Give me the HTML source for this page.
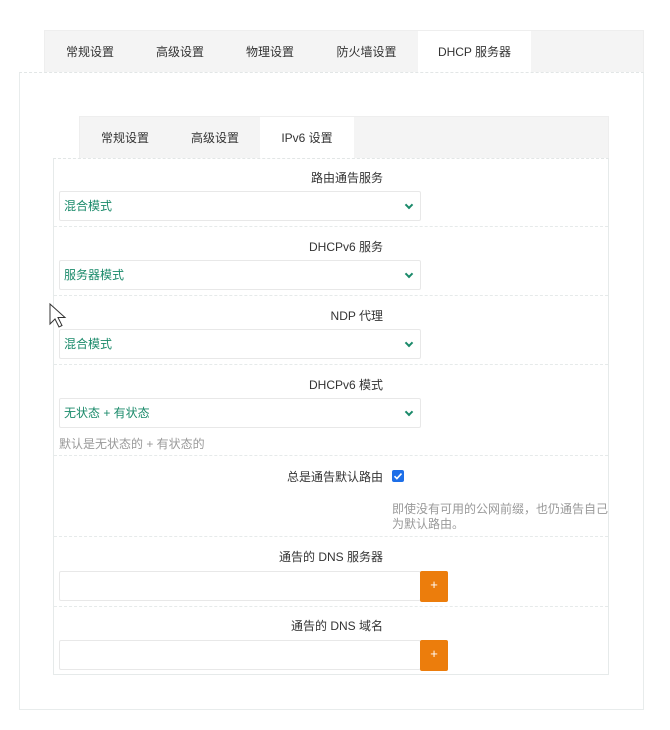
<!DOCTYPE html>
<html><head><meta charset="utf-8"><style>
*{box-sizing:border-box;margin:0;padding:0}
body{width:670px;height:730px;background:#fff;font-family:"Liberation Sans","Noto Sans CJK SC",sans-serif;font-size:12px;color:#333;position:relative;overflow:hidden}
.a{position:absolute}
.tabs{background:#f4f4f4;border:1px solid #eee;border-bottom:none}
.tab{position:absolute;top:0;height:100%;line-height:42px;text-align:center;color:#333}
.tab.on{background:#fff}
.lbl{position:absolute;right:287px;width:300px;text-align:right;color:#333}
.sel{position:absolute;left:59px;width:362px;height:30px;border:1px solid #e8e8e8;border-radius:2px;color:#1a8a6a;line-height:28px;padding-left:4px;background:#fff}
.sel:after{content:"";position:absolute;right:8px;top:10px;width:4px;height:4px;border-right:2px solid #1a8a6a;border-bottom:2px solid #1a8a6a;transform:rotate(45deg)}
.sep{position:absolute;left:54px;width:554px;border-top:1px dashed #e6eaea}
.inp{position:absolute;left:59px;width:362px;height:30px;border:1px solid #e8e8e8;border-radius:2px;background:#fff}
.btn{position:absolute;left:420px;width:28px;height:31px;background:#ec7d0c;border-radius:2px;color:#fff;text-align:center;line-height:28px;font-size:13px}
.hint{color:#999}
</style></head><body>
<div class="a tabs" style="left:44px;top:30px;width:600px;height:42px">
<div class="tab" style="left:0;width:90px">常规设置</div>
<div class="tab" style="left:90px;width:90px">高级设置</div>
<div class="tab" style="left:180px;width:90px">物理设置</div>
<div class="tab" style="left:270px;width:103px">防火墙设置</div>
<div class="tab on" style="left:373px;width:113px">DHCP 服务器</div>
</div>
<div class="a" style="left:19px;top:72px;width:625px;height:638px;border:1px solid #e8ecec;border-top:1px dashed #e2e6e6"></div>
<div class="a tabs" style="left:79px;top:116px;width:530px;height:42px">
<div class="tab" style="left:0;width:90px">常规设置</div>
<div class="tab" style="left:90px;width:90px">高级设置</div>
<div class="tab on" style="left:180px;width:94px">IPv6 设置</div>
</div>
<div class="a" style="left:53px;top:158px;width:556px;height:517px;border:1px solid #e6eaea;border-top:1px dashed #e2e6e6"></div>

<div class="lbl" style="top:169px">路由通告服务</div>
<div class="sel" style="top:191px">混合模式</div>
<div class="sep" style="top:226px"></div>
<div class="lbl" style="top:238px">DHCPv6 服务</div>
<div class="sel" style="top:260px">服务器模式</div>
<div class="sep" style="top:295px"></div>
<div class="lbl" style="top:307px">NDP 代理</div>
<div class="sel" style="top:329px">混合模式</div>
<div class="sep" style="top:364px"></div>
<div class="lbl" style="top:376px">DHCPv6 模式</div>
<div class="sel" style="top:398px">无状态 + 有状态</div>
<div class="a hint" style="left:59px;top:435px">默认是无状态的 + 有状态的</div>
<div class="sep" style="top:455px"></div>
<div class="lbl" style="top:468px">总是通告默认路由</div>
<div class="a" style="left:392px;top:470px;width:12px;height:12px;background:#1e6fe8;border-radius:2px"><svg width="12" height="12" viewBox="0 0 12 12"><path d="M2.5 6.2l2.4 2.4 4.6-5" fill="none" stroke="#fff" stroke-width="1.6"/></svg></div>
<div class="a hint" style="left:392px;top:502px;width:216px;line-height:15px">即使没有可用的公网前缀，也仍通告自己为默认路由。</div>
<div class="sep" style="top:536px"></div>
<div class="lbl" style="top:548px">通告的 DNS 服务器</div>
<div class="inp" style="top:571px"></div>
<div class="btn" style="top:571px">+</div>
<div class="sep" style="top:606px"></div>
<div class="lbl" style="top:617px">通告的 DNS 域名</div>
<div class="inp" style="top:640px"></div>
<div class="btn" style="top:640px">+</div>

<svg class="a" style="left:49px;top:303px" width="18" height="26" viewBox="0 0 18 26"><path d="M1 1v20l5-5 4 8 3-1.5-4-8h7z" fill="#fff" stroke="#333" stroke-width="1"/></svg>
</body></html>
